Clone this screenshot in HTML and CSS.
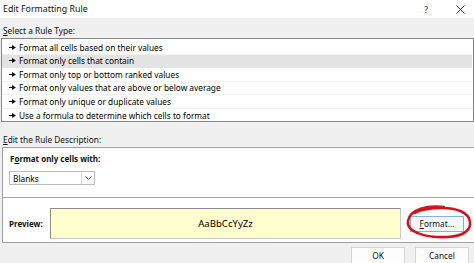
FILE: index.html
```html
<!DOCTYPE html>
<html>
<head>
<meta charset="utf-8">
<link rel="stylesheet" href="styles.css">
</head>
<body>
<div class="dialog">
  <div class="titlebar">
    <span class="title">Edit Formatting Rule</span>
    <div class="tb-buttons">
      <span class="help">?</span>
      <svg class="close" width="9" height="9" viewBox="0 0 9 9"><path d="M0.5 0.5L8.5 8.5M8.5 0.5L0.5 8.5" stroke="#333" stroke-width="1" fill="none"/></svg>
    </div>
  </div>
  <div class="body">
    <div class="label label-first"><u>S</u>elect a Rule Type:</div>
    <div class="listbox">
      <div class="row"><svg class="arr" width="7" height="5" viewBox="0 0 7 5"><path d="M0 2.5H3.5" stroke="#111" stroke-width="1"/><path d="M3 0L7 2.5L3 5Z" fill="#111"/></svg>Format all cells based on their values</div>
      <div class="row sel"><svg class="arr" width="7" height="5" viewBox="0 0 7 5"><path d="M0 2.5H3.5" stroke="#111" stroke-width="1"/><path d="M3 0L7 2.5L3 5Z" fill="#111"/></svg>Format only cells that contain</div>
      <div class="row"><svg class="arr" width="7" height="5" viewBox="0 0 7 5"><path d="M0 2.5H3.5" stroke="#111" stroke-width="1"/><path d="M3 0L7 2.5L3 5Z" fill="#111"/></svg>Format only top or bottom ranked values</div>
      <div class="row"><svg class="arr" width="7" height="5" viewBox="0 0 7 5"><path d="M0 2.5H3.5" stroke="#111" stroke-width="1"/><path d="M3 0L7 2.5L3 5Z" fill="#111"/></svg>Format only values that are above or below average</div>
      <div class="row"><svg class="arr" width="7" height="5" viewBox="0 0 7 5"><path d="M0 2.5H3.5" stroke="#111" stroke-width="1"/><path d="M3 0L7 2.5L3 5Z" fill="#111"/></svg>Format only unique or duplicate values</div>
      <div class="row last"><svg class="arr" width="7" height="5" viewBox="0 0 7 5"><path d="M0 2.5H3.5" stroke="#111" stroke-width="1"/><path d="M3 0L7 2.5L3 5Z" fill="#111"/></svg>Use a formula to determine which cells to format</div>
    </div>
    <div class="label label-second"><u>E</u>dit the Rule Description:</div>
    <div class="panel">
      <div class="section sec-top">
        <div class="bold">F<u>o</u>rmat only cells with:</div>
        <div class="combo">
          <span class="combo-text">Blanks</span>
          <span class="combo-btn"><svg width="7" height="4" viewBox="0 0 7 4"><path d="M0.5 0.5L3.5 3.5L6.5 0.5" stroke="#555" stroke-width="1" fill="none"/></svg></span>
        </div>
      </div>
      <div class="section sec-preview">
        <div class="bold preview-label">Preview:</div>
        <div class="preview-box">AaBbCcYyZz</div>
        <div class="format-wrap">
          <button class="btn btn-format"><u>F</u>ormat...</button>
          <svg class="circle" width="70" height="38" viewBox="0 0 70 38"><path d="M40 4 C 24 2, 6 6, 4 18 C 2 30, 24 35, 44 34 C 60 33, 67 27, 66 19 C 65 9, 52 5, 38 5 C 28 5, 16 7, 10 10" stroke="#d0141c" stroke-width="2.6" fill="none" stroke-linecap="round"/></svg>
        </div>
      </div>
    </div>
    <div class="buttons">
      <button class="btn btn-ok">OK</button>
      <button class="btn btn-cancel">Cancel</button>
    </div>
  </div>
</div>
</body>
</html>
```
FILE: styles.css
```css
* { box-sizing: border-box; }
html, body { margin: 0; padding: 0; }
body {
  width: 474px;
  height: 263px;
  overflow: hidden;
  font-family: "Noto Sans", "DejaVu Sans", sans-serif;
  font-size: 8.3px;
  color: #000;
  background: #f0f0f0;
}
.dialog { width: 474px; height: 263px; display: flex; flex-direction: column; }
.titlebar {
  height: 18px;
  flex: none;
  background: #fff;
  display: flex;
  align-items: center;
  justify-content: space-between;
  padding-left: 3px;
}
.title { font-size: 8.8px; color: #111; }
.tb-buttons { display: flex; align-items: center; gap: 28px; padding-right: 9px; }
.help { font-size: 8.5px; color: #333; }
.close { display: block; }
.body { flex: 1; background: #f0f0f0; display: flex; flex-direction: column; }
.label { padding-left: 3px; height: 12px; line-height: 12px; color: #111; }
.label-first { margin-top: 7px; }
.label-second { margin-top: 12px; }
.listbox {
  margin-top: 1px;
  margin-left: 1px;
  width: 473px;
  height: 84px;
  flex: none;
  border: 1px solid #858585;
  background: #fff;
  padding-top: 2px;
}
.row {
  height: 13.5px;
  display: flex;
  align-items: center;
  padding-left: 7px;
  border-bottom: 1px solid #f2f2f2;
}
.row.last { border-bottom: none; }
.row.sel { background: #e3e3e3; border-bottom-color: #e3e3e3; margin-right: 1px; }
.arr { margin-right: 3px; flex: none; }
.panel {
  margin-left: 2px;
  margin-top: 1px;
  width: 480px;
  flex: none;
  border: 1px solid #a0a0a0;
  background: #fff;
}
.section { padding-left: 6px; }
.sec-top { height: 50px; border-bottom: 1px solid #a8a8a8; padding-top: 5px; }
.bold { font-weight: bold; font-size: 8px; color: #111; }
.sec-top .bold { height: 12px; line-height: 12px; padding-left: 1px; }
.combo {
  margin-top: 6px;
  width: 86px;
  height: 14px;
  border: 1px solid #bdbdbd;
  background: #fff;
  display: flex;
  align-items: center;
}
.combo-text { flex: 1; padding-left: 3px; }
.combo-btn {
  width: 13px;
  height: 12px;
  border-left: 1px solid #dcdcdc;
  display: flex;
  align-items: center;
  justify-content: center;
}
.sec-preview {
  height: 44px;
  display: flex;
  align-items: center;
  padding-top: 10px;
  padding-bottom: 3px;
}
.preview-label { width: 41px; flex: none; }
.preview-box {
  width: 351px;
  height: 31px;
  flex: none;
  background: #ffffcf;
  border: 1px solid #8c8c8c;
  border-right-color: #c8c8c8;
  border-bottom-color: #c8c8c8;
  display: flex;
  align-items: center;
  justify-content: center;
  font-size: 9.6px;
}
.format-wrap { position: relative; margin-left: 9px; }
.btn {
  font-family: inherit;
  font-size: 8.3px;
  color: #111;
  background: #fdfdfd;
  border: 1px solid #d4d4d4;
  padding: 0;
  margin: 0;
}
.btn-format {
  width: 54px;
  height: 16px;
  border: 1px solid #7fb2e5;
  background: #f4f8fc;
  display: block;
}
.circle { position: absolute; left: -6px; top: -13px; pointer-events: none; }
.buttons {
  display: flex;
  justify-content: flex-end;
  gap: 10px;
  padding-right: 5px;
  margin-top: 4px;
}
.btn-ok, .btn-cancel { width: 54px; height: 20px; padding-bottom: 4px; flex: none; }
```
